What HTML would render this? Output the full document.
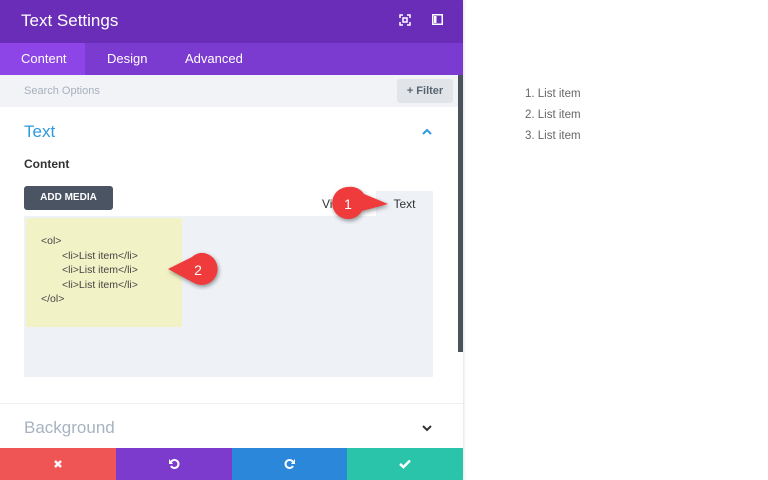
<!DOCTYPE html><html><head><style>
body{margin:0;width:768px;height:480px;background:#fff;font-family:"Liberation Sans",sans-serif;position:relative;overflow:hidden}
.a{position:absolute}
</style></head><body>
<div class="a" style="left:0;top:0;width:463px;height:480px;background:#fff;box-shadow:1px 0 3px rgba(0,0,0,.12)"></div>
<div class="a" style="left:0;top:0;width:463px;height:43px;background:#6a2db8"></div>
<div class="a" style="left:21px;top:11px;color:#fff;font-size:17px">Text Settings</div>
<svg class="a" style="left:399px;top:14px" width="12" height="12" viewBox="0 0 12 12" fill="none" stroke="#fff" stroke-width="1.5"><path d="M1 4V1h3M8 1h3v3M11 8v3H8M4 11H1V8"/><rect x="4" y="4" width="4" height="4"/></svg>
<svg class="a" style="left:432px;top:14px" width="11" height="11" viewBox="0 0 11 11"><rect x=".75" y=".75" width="9.5" height="9.5" fill="none" stroke="#fff" stroke-width="1.5"/><rect x="2" y="2" width="2.5" height="7" fill="#fff"/></svg>
<div class="a" style="left:0;top:43px;width:463px;height:32px;background:#7b3ad0"></div>
<div class="a" style="left:0;top:43px;width:85px;height:32px;background:#8d45e8"></div>
<div class="a" style="left:21px;top:51px;color:#fff;font-size:13px">Content</div>
<div class="a" style="left:107px;top:51px;color:#fff;font-size:13px">Design</div>
<div class="a" style="left:185px;top:51px;color:#fff;font-size:13px">Advanced</div>
<div class="a" style="left:0;top:75px;width:458px;height:32px;background:#f1f3f7"></div>
<div class="a" style="left:24px;top:85px;color:#a8b0bb;font-size:11px">Search Options</div>
<div class="a" style="left:397px;top:79px;width:56px;height:24px;background:#e1e5ea;border-radius:3px;color:#5a6470;font-size:11px;line-height:24px;text-align:center;font-weight:bold">+ Filter</div>
<div class="a" style="left:458px;top:75px;width:5px;height:277px;background:#4a525c"></div>
<div class="a" style="left:24px;top:122px;color:#2e9adf;font-size:17px">Text</div>
<svg class="a" style="left:422px;top:128px" width="10" height="7"><path d="M1 6L5 2L9 6" fill="none" stroke="#2e9adf" stroke-width="2"/></svg>
<div class="a" style="left:24px;top:157px;color:#333;font-size:12px;font-weight:bold">Content</div>
<div class="a" style="left:24px;top:186px;width:89px;height:24px;background:#4a5462;border-radius:3px;color:#fff;font-size:10px;font-weight:bold;line-height:24px;text-align:center">ADD MEDIA</div>
<div class="a" style="left:306px;top:191px;width:70px;height:25px;background:#fff;font-size:12px;color:#333;line-height:27px;padding-left:16px;box-sizing:border-box">Vis</div>
<div class="a" style="left:376px;top:191px;width:57px;height:25px;background:#eef2f7;font-size:12px;color:#333;line-height:27px;text-align:center">Text</div>
<div class="a" style="left:24px;top:216px;width:409px;height:161px;background:#eef2f7"></div>
<div class="a" style="left:26px;top:218px;width:156px;height:109px;background:#f1f2c6"></div>
<div class="a" style="left:41px;top:234px;font-size:10.5px;color:#444;line-height:14.5px">&lt;ol&gt;<br><span style="padding-left:21px">&lt;li&gt;List item&lt;/li&gt;</span><br><span style="padding-left:21px">&lt;li&gt;List item&lt;/li&gt;</span><br><span style="padding-left:21px">&lt;li&gt;List item&lt;/li&gt;</span><br>&lt;/ol&gt;</div>
<svg class="a" style="left:326px;top:184px" width="70" height="40"><path d="M22 3A16 16 0 1 0 36 27L62 20L38 10A16 16 0 0 0 22 3Z" fill="#ef3b3b" filter="drop-shadow(1px 2px 2px rgba(0,0,0,.4))"/><text x="22" y="25" fill="#fff" font-size="14" font-family="Liberation Sans" text-anchor="middle">1</text></svg>
<svg class="a" style="left:164px;top:250px" width="60" height="40"><path d="M36 3A16 16 0 1 1 30 33L4 19L28 7A16 16 0 0 1 36 3Z" fill="#ef3b3b" filter="drop-shadow(1px 2px 2px rgba(0,0,0,.4))"/><text x="34" y="25" fill="#fff" font-size="14" font-family="Liberation Sans" text-anchor="middle">2</text></svg>
<div class="a" style="left:0;top:403px;width:463px;height:1px;background:#eceff3"></div>
<div class="a" style="left:24px;top:418px;color:#a8b3c0;font-size:17px">Background</div>
<svg class="a" style="left:422px;top:425px" width="10" height="7"><path d="M1 1L5 5L9 1" fill="none" stroke="#333" stroke-width="2"/></svg>
<div class="a" style="left:0;top:448px;width:116px;height:32px;background:#ef5555"></div>
<div class="a" style="left:116px;top:448px;width:116px;height:32px;background:#7d3bcd"></div>
<div class="a" style="left:232px;top:448px;width:115px;height:32px;background:#2b87da"></div>
<div class="a" style="left:347px;top:448px;width:116px;height:32px;background:#29c4a9"></div>
<svg class="a" style="left:53px;top:459px" width="10" height="10"><path d="M2 2L8 8M8 2L2 8" stroke="#fff" stroke-width="2.5"/></svg>
<svg class="a" style="left:168px;top:458px" width="12" height="12" viewBox="0 0 12 12"><path d="M3 4A4 4 0 1 1 3 8" fill="none" stroke="#fff" stroke-width="2"/><path d="M1 1V6H5Z" fill="#fff"/></svg>
<svg class="a" style="left:284px;top:458px" width="12" height="12" viewBox="0 0 12 12"><path d="M9 4A4 4 0 1 0 9 8" fill="none" stroke="#fff" stroke-width="2"/><path d="M11 1V6H7Z" fill="#fff"/></svg>
<svg class="a" style="left:399px;top:459px" width="12" height="10"><path d="M1 5L4.5 8L11 1.5" fill="none" stroke="#fff" stroke-width="2.5"/></svg>
<div class="a" style="left:525px;top:84px;font-size:11.5px;color:#666;line-height:21px">1. List item<br>2. List item<br>3. List item</div>
</body></html>
